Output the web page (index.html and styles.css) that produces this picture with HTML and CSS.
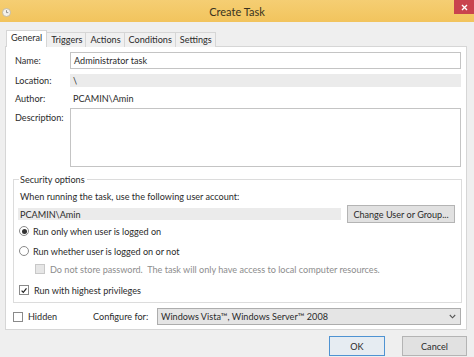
FILE: index.html
```html
<!DOCTYPE html>
<html>
<head>
<meta charset="utf-8">
<link rel="stylesheet" href="styles.css">
</head>
<body>
<div class="window">
  <div class="titlebar">
    <div class="app-icon">
      <svg width="9" height="9" viewBox="0 0 9 9"><circle cx="4.5" cy="4.5" r="4" fill="#f4f1ea" stroke="#b9b2a0" stroke-width="0.8"/><path d="M4.5 2.2V4.6H6.3" fill="none" stroke="#8a8a8a" stroke-width="0.9"/></svg>
    </div>
    <div class="title">Create Task</div>
    <div class="close">
      <svg width="7" height="7" viewBox="0 0 7 7"><path d="M1 1L6 6M6 1L1 6" stroke="#fff" stroke-width="1.4"/></svg>
    </div>
  </div>
  <div class="content">
    <div class="tabs">
      <div class="tab active">General</div>
      <div class="tab">Triggers</div>
      <div class="tab">Actions</div>
      <div class="tab">Conditions</div>
      <div class="tab">Settings</div>
    </div>
    <div class="panel">
      <div class="form">
        <div class="label">Name:</div>
        <div class="input">Administrator task</div>
        <div class="label loc-label">Location:</div>
        <div class="readonly">\</div>
        <div class="label author-label">Author:</div>
        <div class="plain">PCAMIN\Amin</div>
        <div class="label desc-label">Description:</div>
        <div class="textarea"></div>
      </div>
      <fieldset class="group">
        <legend>Security options</legend>
        <div class="line">When running the task, use the following user account:</div>
        <div class="account-row">
          <div class="account">PCAMIN\Amin</div>
          <div class="btn change">Change User or Group...</div>
        </div>
        <div class="opt r1"><span class="radio checked"></span>Run only when user is logged on</div>
        <div class="opt r2"><span class="radio"></span>Run whether user is logged on or not</div>
        <div class="opt sub disabled"><span class="check dis"></span>Do not store password.&nbsp; The task will only have access to local computer resources.</div>
        <div class="opt r4"><span class="check on"><svg width="9" height="9" viewBox="0 0 9 9"><path d="M1.8 4.6L3.7 6.6L7.3 2" fill="none" stroke="#222" stroke-width="1.4"/></svg></span>Run with highest privileges</div>
      </fieldset>
      <div class="bottom-row">
        <div class="opt hidden-opt"><span class="check"></span>Hidden</div>
        <div class="cfg-label">Configure for:</div>
        <div class="select">
          <span>Windows Vista™, Windows Server™ 2008</span>
          <svg width="7" height="5" viewBox="0 0 7 5"><path d="M0.8 1L3.5 3.8L6.2 1" fill="none" stroke="#555" stroke-width="1.1"/></svg>
        </div>
      </div>
    </div>
    <div class="actions">
      <div class="btn ok">OK</div>
      <div class="btn cancel">Cancel</div>
    </div>
  </div>
</div>
</body>
</html>
```
FILE: styles.css
```css
* { box-sizing: border-box; }
html, body { margin: 0; padding: 0; }
body {
  background: #efefef;
  font-family: Lato, "Open Sans", sans-serif;
  font-size: 9.1px;
  color: #2b2b2b;
}
.window {
  width: 474px;
  height: 357px;
  overflow: hidden;
  background: #efefef;
}
.titlebar {
  height: 22px;
  background: linear-gradient(#f5ce73, #f2c45d);
  display: grid;
  grid-template-columns: 1fr auto 1fr;
  align-items: center;
}
.app-icon {
  padding-left: 2px;
  padding-top: 2px;
  display: flex;
}
.title {
  font-size: 11px;
  color: #3a3320;
}
.close {
  justify-self: end;
  align-self: start;
  width: 20px;
  height: 14px;
  background: #c9434e;
  display: flex;
  align-items: center;
  justify-content: center;
}
.content {
  padding: 8px 7px 0 5px;
}
.tabs {
  display: flex;
  align-items: flex-end;
  padding-left: 1px;
  height: 17px;
  margin-bottom: -1px;
  position: relative;
  z-index: 1;
}
.tab {
  height: 15px;
  padding: 0 3px 0 4px;
  border: 1px solid #d6d6d6;
  border-bottom: none;
  border-left: none;
  background: #f0f0f0;
  display: flex;
  align-items: center;
  line-height: 1;
}
.tab.active {
  height: 17px;
  background: #fff;
  border-left: 1px solid #d6d6d6;
  padding: 0 4px 2px;
}
.panel {
  height: 284px;
  background: #fff;
  border: 1px solid #d6d6d6;
  padding: 5px 5px 0 7px;
}
.form {
  display: grid;
  grid-template-columns: 57px 1fr;
  line-height: 13px;
}
.label {
  padding-left: 2px;
  display: flex;
  align-items: center;
}
.input {
  height: 17px;
  border: 1px solid #c4c4c4;
  padding: 0 3px;
  display: flex;
  align-items: center;
}
.loc-label, .readonly { margin-top: 5px; }
.readonly {
  height: 13px;
  background: #ebebeb;
  padding: 0 3px;
  display: flex;
  align-items: center;
}
.author-label, .plain { margin-top: 4px; height: 14px; }
.plain { padding-left: 3px; display: flex; align-items: center; }
.desc-label { margin-top: 3px; align-items: flex-start; padding-top: 3px; }
.textarea {
  margin-top: 3px;
  height: 59px;
  border: 1px solid #c4c4c4;
}
.group {
  margin: 6px -1px 0 0;
  border: 1px solid #dcdcdc;
  padding: 4px 5px 4px 6px;
  line-height: 13px;
}
.group legend {
  padding: 0 2px 0 1px;
  margin-left: -1px;
}
.account-row {
  margin-top: 2px;
  display: flex;
  align-items: center;
  gap: 6px;
}
.account {
  flex: 1;
  height: 12px;
  background: #ebebeb;
  display: flex;
  align-items: center;
  margin-left: -2px;
  padding-left: 2px;
}
.btn {
  background: #e1e1e1;
  border: 1px solid #b4b4b4;
  display: flex;
  align-items: center;
  justify-content: center;
}
.change {
  width: 108px;
  height: 18px;
  margin-right: 1px;
}
.opt {
  height: 16px;
  display: flex;
  align-items: center;
}
.r2 { margin-top: 4px; }
.sub { margin-top: 2px; padding-left: 15px; }
.r4 { margin-top: 5px; }
.disabled { color: #8d8d8d; }
.radio {
  width: 10px;
  height: 10px;
  border: 1px solid #8a8a8a;
  border-radius: 50%;
  margin: 0 4px 0 -1px;
  background: #fff;
  display: flex;
  align-items: center;
  justify-content: center;
}
.radio.checked::after {
  content: "";
  width: 5px;
  height: 5px;
  border-radius: 50%;
  background: #333;
}
.check {
  width: 10px;
  height: 10px;
  border: 1px solid #8a8a8a;
  background: #fff;
  margin-right: 5px;
  display: flex;
  align-items: center;
  justify-content: center;
}
.check.dis {
  border-color: #c8c8c8;
  background: #e6e6e6;
}
.check.on { margin-left: -1px; }
.bottom-row {
  margin-top: 5px;
  display: flex;
  align-items: center;
}
.hidden-opt { width: 80px; }
.cfg-label { width: 64px; }
.select {
  flex: 1;
  height: 17px;
  background: #e5e5e5;
  border: 1px solid #adadad;
  display: flex;
  align-items: center;
  justify-content: space-between;
  padding: 0 4px 0 3px;
}
.actions {
  display: flex;
  justify-content: flex-end;
  gap: 17px;
  margin-top: 6px;
}
.ok {
  width: 56px;
  height: 20px;
  border-color: #4f93d2;
  background: #e6ecf2;
}
.cancel {
  width: 65px;
  height: 20px;
}
```
